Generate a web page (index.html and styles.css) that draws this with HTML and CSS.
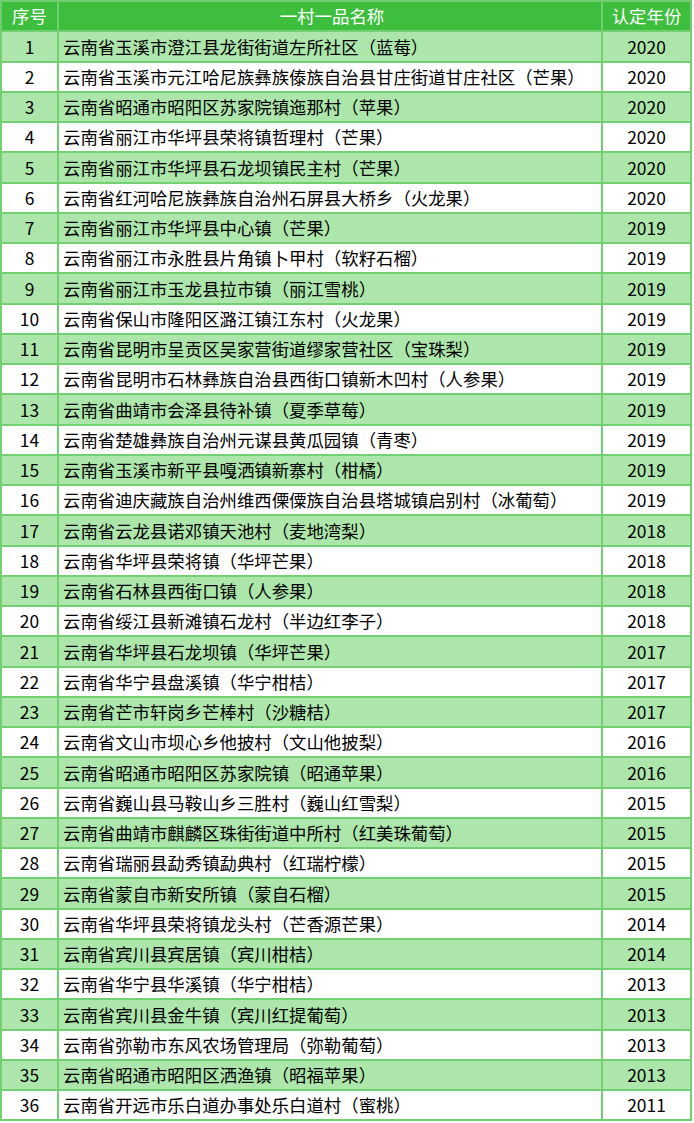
FILE: index.html
```html
<!DOCTYPE html>
<html lang="zh-CN">
<head>
<meta charset="utf-8">
<title>一村一品名称</title>
<link rel="stylesheet" href="styles.css">
</head>
<body>
<div class="table">
  <div class="row head"><div class="c num">序号</div><div class="c name center">一村一品名称</div><div class="c year">认定年份</div></div>
  <div class="row alt"><div class="c num">1</div><div class="c name">云南省玉溪市澄江县龙街街道左所社区（蓝莓）</div><div class="c year">2020</div></div>
  <div class="row"><div class="c num">2</div><div class="c name">云南省玉溪市元江哈尼族彝族傣族自治县甘庄街道甘庄社区（芒果）</div><div class="c year">2020</div></div>
  <div class="row alt"><div class="c num">3</div><div class="c name">云南省昭通市昭阳区苏家院镇迤那村（苹果）</div><div class="c year">2020</div></div>
  <div class="row"><div class="c num">4</div><div class="c name">云南省丽江市华坪县荣将镇哲理村（芒果）</div><div class="c year">2020</div></div>
  <div class="row alt"><div class="c num">5</div><div class="c name">云南省丽江市华坪县石龙坝镇民主村（芒果）</div><div class="c year">2020</div></div>
  <div class="row"><div class="c num">6</div><div class="c name">云南省红河哈尼族彝族自治州石屏县大桥乡（火龙果）</div><div class="c year">2020</div></div>
  <div class="row alt"><div class="c num">7</div><div class="c name">云南省丽江市华坪县中心镇（芒果）</div><div class="c year">2019</div></div>
  <div class="row"><div class="c num">8</div><div class="c name">云南省丽江市永胜县片角镇卜甲村（软籽石榴）</div><div class="c year">2019</div></div>
  <div class="row alt"><div class="c num">9</div><div class="c name">云南省丽江市玉龙县拉市镇（丽江雪桃）</div><div class="c year">2019</div></div>
  <div class="row"><div class="c num">10</div><div class="c name">云南省保山市隆阳区潞江镇江东村（火龙果）</div><div class="c year">2019</div></div>
  <div class="row alt"><div class="c num">11</div><div class="c name">云南省昆明市呈贡区吴家营街道缪家营社区（宝珠梨）</div><div class="c year">2019</div></div>
  <div class="row"><div class="c num">12</div><div class="c name">云南省昆明市石林彝族自治县西街口镇新木凹村（人参果）</div><div class="c year">2019</div></div>
  <div class="row alt"><div class="c num">13</div><div class="c name">云南省曲靖市会泽县待补镇（夏季草莓）</div><div class="c year">2019</div></div>
  <div class="row"><div class="c num">14</div><div class="c name">云南省楚雄彝族自治州元谋县黄瓜园镇（青枣）</div><div class="c year">2019</div></div>
  <div class="row alt"><div class="c num">15</div><div class="c name">云南省玉溪市新平县嘎洒镇新寨村（柑橘）</div><div class="c year">2019</div></div>
  <div class="row"><div class="c num">16</div><div class="c name">云南省迪庆藏族自治州维西傈僳族自治县塔城镇启别村（冰葡萄）</div><div class="c year">2019</div></div>
  <div class="row alt"><div class="c num">17</div><div class="c name">云南省云龙县诺邓镇天池村（麦地湾梨）</div><div class="c year">2018</div></div>
  <div class="row"><div class="c num">18</div><div class="c name">云南省华坪县荣将镇（华坪芒果）</div><div class="c year">2018</div></div>
  <div class="row alt"><div class="c num">19</div><div class="c name">云南省石林县西街口镇（人参果）</div><div class="c year">2018</div></div>
  <div class="row"><div class="c num">20</div><div class="c name">云南省绥江县新滩镇石龙村（半边红李子）</div><div class="c year">2018</div></div>
  <div class="row alt"><div class="c num">21</div><div class="c name">云南省华坪县石龙坝镇（华坪芒果）</div><div class="c year">2017</div></div>
  <div class="row"><div class="c num">22</div><div class="c name">云南省华宁县盘溪镇（华宁柑桔）</div><div class="c year">2017</div></div>
  <div class="row alt"><div class="c num">23</div><div class="c name">云南省芒市轩岗乡芒棒村（沙糖桔）</div><div class="c year">2017</div></div>
  <div class="row"><div class="c num">24</div><div class="c name">云南省文山市坝心乡他披村（文山他披梨）</div><div class="c year">2016</div></div>
  <div class="row alt"><div class="c num">25</div><div class="c name">云南省昭通市昭阳区苏家院镇（昭通苹果）</div><div class="c year">2016</div></div>
  <div class="row"><div class="c num">26</div><div class="c name">云南省巍山县马鞍山乡三胜村（巍山红雪梨）</div><div class="c year">2015</div></div>
  <div class="row alt"><div class="c num">27</div><div class="c name">云南省曲靖市麒麟区珠街街道中所村（红美珠葡萄）</div><div class="c year">2015</div></div>
  <div class="row"><div class="c num">28</div><div class="c name">云南省瑞丽县勐秀镇勐典村（红瑞柠檬）</div><div class="c year">2015</div></div>
  <div class="row alt"><div class="c num">29</div><div class="c name">云南省蒙自市新安所镇（蒙自石榴）</div><div class="c year">2015</div></div>
  <div class="row"><div class="c num">30</div><div class="c name">云南省华坪县荣将镇龙头村（芒香源芒果）</div><div class="c year">2014</div></div>
  <div class="row alt"><div class="c num">31</div><div class="c name">云南省宾川县宾居镇（宾川柑桔）</div><div class="c year">2014</div></div>
  <div class="row"><div class="c num">32</div><div class="c name">云南省华宁县华溪镇（华宁柑桔）</div><div class="c year">2013</div></div>
  <div class="row alt"><div class="c num">33</div><div class="c name">云南省宾川县金牛镇（宾川红提葡萄）</div><div class="c year">2013</div></div>
  <div class="row"><div class="c num">34</div><div class="c name">云南省弥勒市东风农场管理局（弥勒葡萄）</div><div class="c year">2013</div></div>
  <div class="row alt"><div class="c num">35</div><div class="c name">云南省昭通市昭阳区洒渔镇（昭福苹果）</div><div class="c year">2013</div></div>
  <div class="row"><div class="c num">36</div><div class="c name">云南省开远市乐白道办事处乐白道村（蜜桃）</div><div class="c year">2011</div></div>
</div>
</body>
</html>
```
FILE: styles.css
```css
html, body {
  margin: 0;
  padding: 0;
  background: #ffffff;
}
body {
  font-family: "Noto Sans CJK SC", "Noto Sans", sans-serif;
  font-size: 17.4px;
  color: #000;
}
.table {
  width: 688px;
  height: 1117px;
  padding: 2px;
  background: #72d072;
  display: flex;
  flex-direction: column;
  gap: 2px;
}
.row {
  flex: 1;
  display: grid;
  grid-template-columns: 55px 542px 87px;
  gap: 2px;
  min-height: 0;
}
.c {
  background: #ffffff;
  display: flex;
  align-items: center;
  line-height: 1;
  white-space: nowrap;
  overflow: hidden;
}
.row.alt .c {
  background: #ade6ab;
}
.row.head .c {
  background: #3dbe3d;
  color: #ffffff;
}
.num, .year, .center {
  justify-content: center;
}
.name {
  padding-left: 4px;
}
```
